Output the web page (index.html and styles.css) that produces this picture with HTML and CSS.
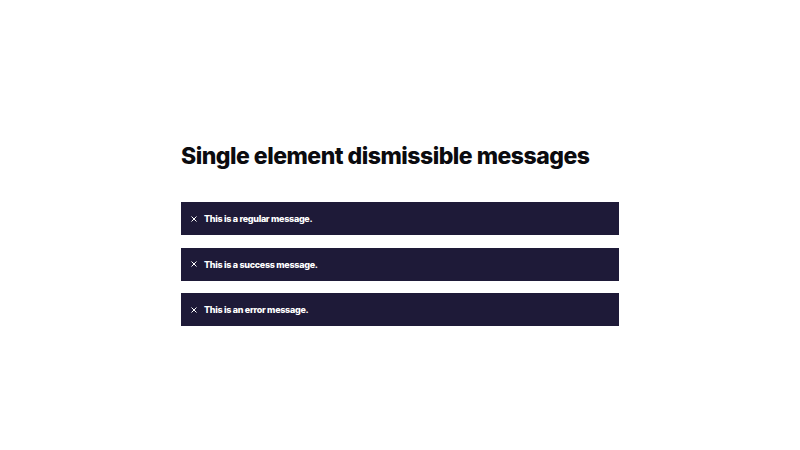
FILE: index.html
```html
<!DOCTYPE html>
<html lang="en">
<head>
<meta charset="utf-8">
<title>Single element dismissible messages</title>
<link rel="stylesheet" href="styles.css">
</head>
<body>
<main class="page">
  <section class="wrap">
    <h1 class="title">Single element dismissible messages</h1>
    <div class="list">
      <div class="msg"><svg class="x" viewBox="0 0 6 6" width="6" height="6"><path d="M0.5 0.5L5.5 5.5M5.5 0.5L0.5 5.5" stroke="#fff" stroke-width="1" fill="none"/></svg><span class="text">This is a regular message.</span></div>
      <div class="msg"><svg class="x" viewBox="0 0 6 6" width="6" height="6"><path d="M0.5 0.5L5.5 5.5M5.5 0.5L0.5 5.5" stroke="#fff" stroke-width="1" fill="none"/></svg><span class="text">This is a success message.</span></div>
      <div class="msg"><svg class="x" viewBox="0 0 6 6" width="6" height="6"><path d="M0.5 0.5L5.5 5.5M5.5 0.5L0.5 5.5" stroke="#fff" stroke-width="1" fill="none"/></svg><span class="text">This is an error message.</span></div>
    </div>
  </section>
</main>
</body>
</html>
```
FILE: styles.css
```css
html, body {
  margin: 0;
  padding: 0;
  background: #ffffff;
}
.page {
  width: 800px;
  height: 450px;
  display: flex;
  justify-content: center;
}
.wrap {
  width: 438px;
  padding-top: 139px;
}
.title {
  margin: 0;
  font-family: Inter, "DejaVu Sans", sans-serif;
  font-weight: 800;
  font-size: 23px;
  line-height: 34px;
  letter-spacing: -0.5px;
  white-space: nowrap;
  color: #0b0b0f;
}
.list {
  margin-top: 29px;
  display: flex;
  flex-direction: column;
  gap: 12.5px;
}
.msg {
  height: 33px;
  background: #1e1a38;
  display: flex;
  align-items: center;
  padding-left: 10px;
  color: #ffffff;
  font-family: Inter, "DejaVu Sans", sans-serif;
  font-weight: 800;
  font-size: 9px;
  letter-spacing: -0.3px;
}
.x {
  flex: none;
  margin-right: 7px;
}
```
